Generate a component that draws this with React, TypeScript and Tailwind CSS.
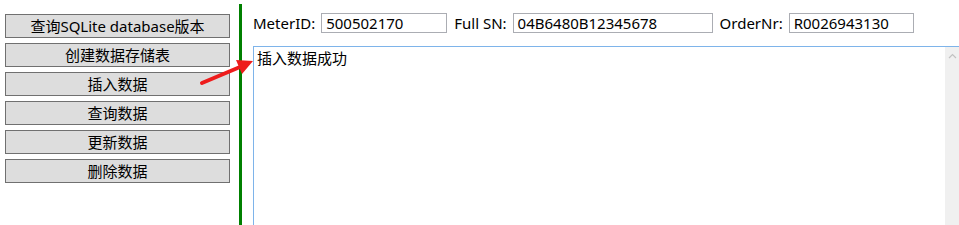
import React from 'react';

const buttons = [
  '查询SQLite database版本',
  '创建数据存储表',
  '插入数据',
  '查询数据',
  '更新数据',
  '删除数据',
];

const font = { fontFamily: '"Noto Sans", "Noto Sans CJK SC", sans-serif' };

function Field({ label, value, width }: { label: string; value: string; width: string }) {
  return (
    <div className="flex items-center">
      <span className="text-[15px] text-black mr-[6px] leading-none">{label}</span>
      <div className={`${width} h-[20px] border border-[#abadb3] bg-white px-[4px] flex items-center text-[15px] leading-none text-black`}>
        {value}
      </div>
    </div>
  );
}

export default function App() {
  return (
    <div className="w-[959px] h-[225px] bg-white flex overflow-hidden relative" style={font}>
      <div className="w-[239px] flex flex-col gap-[5px] pt-[14px] pl-[5px]">
        {buttons.map((b) => (
          <div
            key={b}
            className="w-[225px] h-[24px] border border-[#707070] bg-[#dddddd] flex items-center justify-center text-[15px] text-black leading-none"
          >
            {b}
          </div>
        ))}
      </div>
      <div className="w-[3px] bg-[#008000] mt-[4px]" />
      <div className="flex-1 flex flex-col pl-[11px]">
        <div className="flex gap-[7px] pt-[13px] h-[46px] items-start">
          <Field label="MeterID:" value="500502170" width="w-[126px]" />
          <Field label="Full SN:" value="04B6480B12345678" width="w-[200px]" />
          <Field label="OrderNr:" value="R0026943130" width="w-[125px]" />
        </div>
        <div className="flex-1 border-t border-l border-[#7eb4ea] flex">
          <div className="flex-1 pl-[3px] pt-[1px] text-[15px] text-black leading-[20px]">插入数据成功</div>
          <div className="w-[14px] bg-[#f0f0f0] flex flex-col items-center pt-[6px]">
            <svg width="9" height="6" viewBox="0 0 9 6">
              <path d="M1 5 L4.5 1.5 L8 5" fill="none" stroke="#c2c2c2" strokeWidth="1.2" />
            </svg>
          </div>
        </div>
      </div>
      <svg className="absolute left-0 top-0 pointer-events-none" width="959" height="225">
        <line x1="202" y1="83" x2="240" y2="67" stroke="#ee1c1c" strokeWidth="4" strokeLinecap="round" />
        <polygon points="253,61 236,60 242,74" fill="#ee1c1c" />
      </svg>
    </div>
  );
}
